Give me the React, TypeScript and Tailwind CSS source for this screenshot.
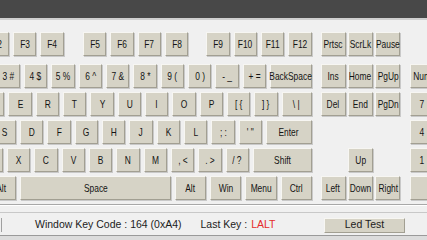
import React from "react";

type KeyProps = { label?: string; w?: string; className?: string };

function Key({ label = "", w = "w-[23.33px]", className = "" }: KeyProps) {
  return (
    <div
      className={`${w} h-[24px] shrink-0 flex items-center justify-center whitespace-nowrap bg-[#d6d3c6] border border-t-[#f7f6f2] border-l-[#f7f6f2] border-r-[#a29f92] border-b-[#a29f92] shadow-[1px_1px_0_#c9c9c9] text-[10.5px] text-[#141414] leading-none ${className}`}
    >
      <span className="inline-block scale-x-[0.8]">{label}</span>
    </div>
  );
}

function Blank() {
  return <div className="w-[25px] h-[24px] shrink-0" />;
}

function Main({ children }: { children: React.ReactNode }) {
  return (
    <div className="w-[311.67px] shrink-0 flex justify-end gap-[4px]">
      {children}
    </div>
  );
}

function Nav({ children }: { children?: React.ReactNode }) {
  return (
    <div className="ml-[9px] w-[79.67px] shrink-0 flex gap-[2.33px]">
      {children}
    </div>
  );
}

function Pad({ children }: { children?: React.ReactNode }) {
  return <div className="ml-[9.67px] shrink-0 flex">{children}</div>;
}

const navKey = "w-[25px]";

export default function App() {
  const row2 = ["3 #", "4 $", "5 %", "6 ^", "7 &", "8 *", "9 (", "0 )", "- _", "+ ="];
  const row3 = ["W", "E", "R", "T", "Y", "U", "I", "O", "P", "[ {", "] }"];
  const row4 = ["S", "D", "F", "G", "H", "J", "K", "L", "; :", "' \""];
  const row5 = ["Z", "X", "C", "V", "B", "N", "M", ", <", ". >", "/ ?"];

  return (
    <div className="w-[427px] h-[240px] overflow-hidden bg-[#f0f0f0] flex flex-col font-['Liberation_Sans',Arial,sans-serif]">
      <div className="h-[18px] shrink-0 bg-[#484848]" />
      <div className="h-[2px] shrink-0 bg-[#cfcfcf]" />

      <div className="pt-[12px] flex flex-col gap-[4px]">
        <div className="flex mb-[4px]">
          <Main>
            <Key label="F2" />
            <Key label="F3" />
            <Key label="F4" />
            <Key label="F5" className="ml-[15.33px]" />
            <Key label="F6" />
            <Key label="F7" />
            <Key label="F8" />
            <Key label="F9" className="ml-[14px]" />
            <Key label="F10" />
            <Key label="F11" />
            <Key label="F12" />
          </Main>
          <Nav>
            <Key label="Prtsc" w={navKey} />
            <Key label="ScrLk" w={navKey} />
            <Key label="Pause" w={navKey} />
          </Nav>
        </div>

        <div className="flex">
          <Main>
            {row2.map((k) => (
              <Key key={k} label={k} />
            ))}
            <Key label="BackSpace" w="w-[41.67px]" />
          </Main>
          <Nav>
            <Key label="Ins" w={navKey} />
            <Key label="Home" w={navKey} />
            <Key label="PgUp" w={navKey} />
          </Nav>
          <Pad>
            <Key label="Num" />
          </Pad>
        </div>

        <div className="flex">
          <Main>
            {row3.map((k) => (
              <Key key={k} label={k} />
            ))}
            <Key label="\ |" w="w-[30px]" />
          </Main>
          <Nav>
            <Key label="Del" w={navKey} />
            <Key label="End" w={navKey} />
            <Key label="PgDn" w={navKey} />
          </Nav>
          <Pad>
            <Key label="7" />
          </Pad>
        </div>

        <div className="flex">
          <Main>
            {row4.map((k) => (
              <Key key={k} label={k} />
            ))}
            <Key label="Enter" w="w-[45.67px]" />
          </Main>
          <Nav />
          <Pad>
            <Key label="4" />
          </Pad>
        </div>

        <div className="flex">
          <Main>
            {row5.map((k) => (
              <Key key={k} label={k} />
            ))}
            <Key label="Shift" w="w-[58.67px]" />
          </Main>
          <Nav>
            <Blank />
            <Key label="Up" w={navKey} />
          </Nav>
          <Pad>
            <Key label="1" />
          </Pad>
        </div>

        <div className="flex">
          <Main>
            <Key label="Alt" w="w-[30px]" />
            <Key label="Space" w="w-[151px]" />
            <Key label="Alt" w="w-[31.17px]" />
            <Key label="Win" w="w-[31.17px]" />
            <Key label="Menu" w="w-[31.17px]" />
            <Key label="Ctrl" w="w-[31.17px]" />
          </Main>
          <Nav>
            <Key label="Left" w={navKey} />
            <Key label="Down" w={navKey} />
            <Key label="Right" w={navKey} />
          </Nav>
          <Pad>
            <Key w="w-[50px]" />
          </Pad>
        </div>
      </div>

      <div className="mt-[4px] h-[1px] bg-[#a8a8a8]" />
      <div className="h-[1px] bg-white" />

      <div className="mt-[6px] h-[23px] shrink-0 flex items-center pt-[2px] border-t border-[#c8c8c8] text-[10.5px] text-[#1c1c1c]">
        <div className="w-[2px] h-[14px] border-r border-[#a0a0a0]" />
        <span className="ml-[33px]">Window Key Code : 164 (0xA4)</span>
        <span className="ml-[19px]">Last Key :</span>
        <span className="ml-[4px] text-[#e52b2b]">LALT</span>
        <div className="ml-auto mr-[22px] w-[81px] h-[15px] flex items-center justify-center bg-[#d6d3c6] border border-t-[#f7f6f2] border-l-[#f7f6f2] border-r-[#a29f92] border-b-[#a29f92]">
          Led Test
        </div>
      </div>
      <div className="flex-1 border-t border-[#9a9a9a] bg-[#dcdcdc]" />
    </div>
  );
}
